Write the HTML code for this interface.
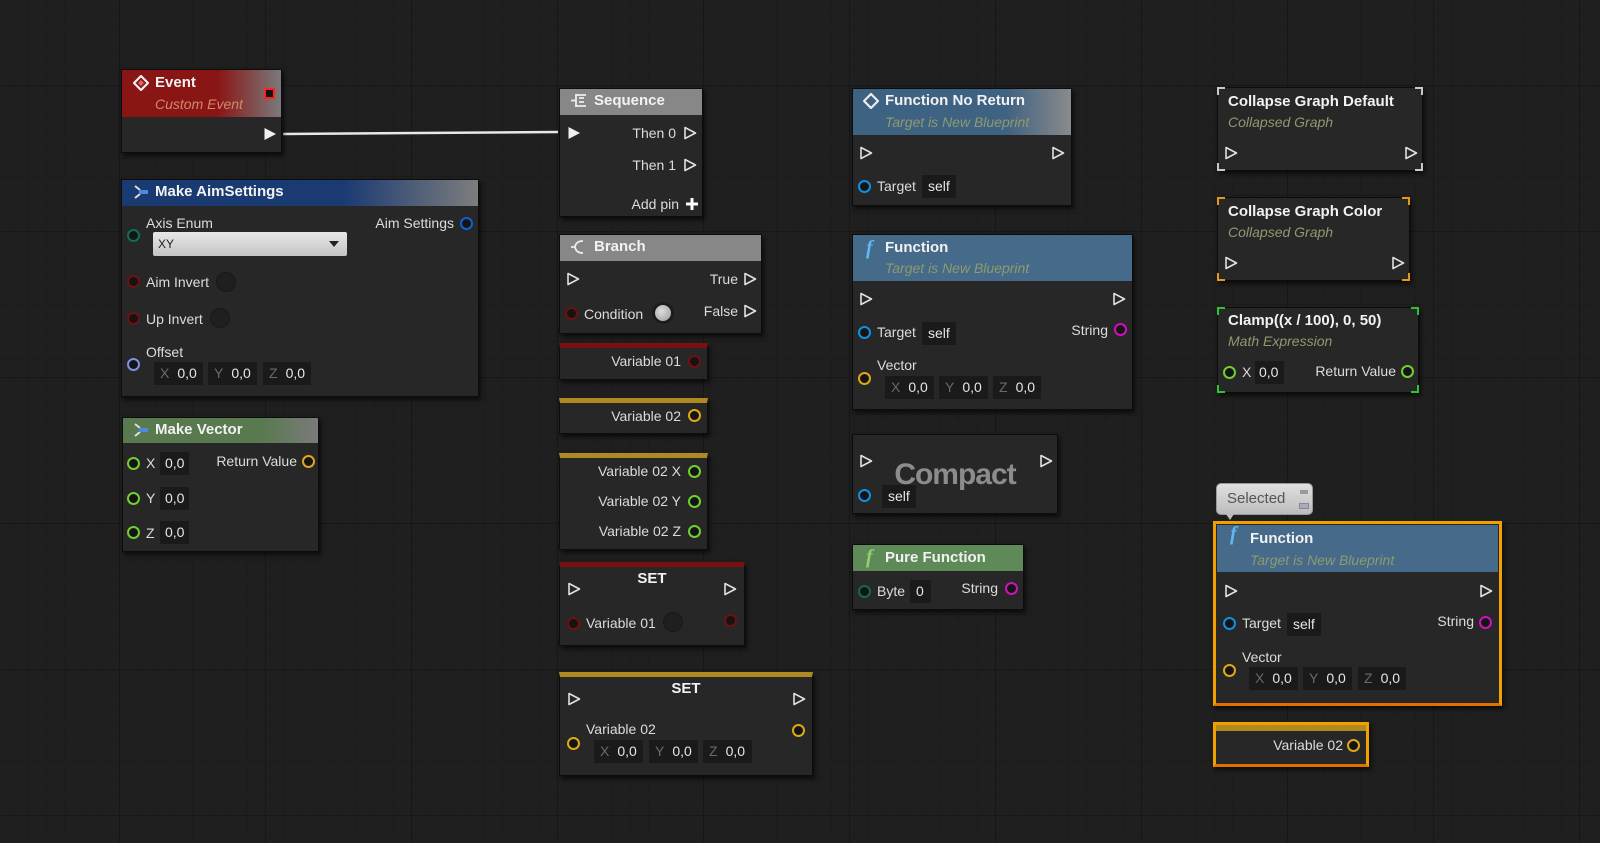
<!DOCTYPE html>
<html><head><meta charset="utf-8"><style>
*{margin:0;padding:0;box-sizing:border-box}
body{width:1600px;height:843px;overflow:hidden;position:relative;background-color:#1f1f1f;
background-image:
linear-gradient(to right,#171717 0,#171717 1px,transparent 1px),
linear-gradient(to bottom,#171717 0,#171717 1px,transparent 1px),
linear-gradient(to right,#1c1c1c 0,#1c1c1c 1px,transparent 1px),
linear-gradient(to bottom,#1c1c1c 0,#1c1c1c 1px,transparent 1px);
background-size:146px 146px,146px 146px,18.25px 18.25px,18.25px 18.25px;
background-position:119px 0,0 85px,119px 0,0 85px;
font-family:"Liberation Sans",sans-serif}
.n{position:absolute;background:#272727;border:1px solid #0c0c0c;box-shadow:2px 3px 4px rgba(0,0,0,.6)}
.h{position:absolute;left:0;right:0;top:0}
.t{position:absolute;font-size:14px;color:#dcdcdc;line-height:18px;white-space:nowrap}
.b{font-weight:bold;font-size:15px;color:#f2f2f2}
.s{font-style:italic;font-size:14px;color:#8f9a6e}
.p{position:absolute;width:13px;height:13px;border:2.5px solid;border-radius:50%;background:#141414}
.v{position:absolute;height:23px;background:#1a1a1a;font-size:14px;line-height:23px;color:#e6e6e6;padding:0 6px;white-space:nowrap}
.v i{font-style:normal;color:#6a6a6a;margin-right:8px}
.e{position:absolute;width:14px;height:14px}
.tog{position:absolute;width:20px;height:20px;border-radius:50%;background:#1f1f1f;border:1px solid #191919}
</style></head><body>
<svg width="0" height="0" style="position:absolute"><defs>
<symbol id="eo" viewBox="0 0 14 14"><path d="M2 1.5 L12.5 7 L2 12.5 Z" fill="none" stroke="#e0e0e0" stroke-width="1.6" stroke-linejoin="round"/></symbol>
<symbol id="ef" viewBox="0 0 14 14"><path d="M1.5 1 L13 7 L1.5 13 Z" fill="#f0f0f0"/></symbol>
</defs></svg>

<svg style="position:absolute;left:0;top:0" width="1600" height="843"><path d="M283 134 L558 132" stroke="#e8e8e8" stroke-width="2.5"/></svg>

<!-- Event -->
<div class="n" style="left:121px;top:69px;width:161px;height:84px">
<div class="h" style="height:47px;background:linear-gradient(to right,#8a1515 0,#8a1515 60%,#7a7a7a 100%)"></div>
<div style="position:absolute;left:142px;top:18px;width:11px;height:11px;background:#111;border:2px solid #ff2020"></div>
</div>
<svg style="position:absolute;left:133px;top:75px" width="16" height="16"><path d="M8 1 L15 8 L8 15 L1 8 Z" fill="none" stroke="#eee" stroke-width="2.2"/><path d="M8 5 L11 8 L8 11 L5 8Z" fill="#d66"/></svg>
<div class="t b" style="left:155px;top:74px">Event</div>
<div class="t s" style="left:155px;top:95px;color:#d08a6c">Custom Event</div>
<svg class="e" style="left:263px;top:127px"><use href="#ef"/></svg>

<!-- Make AimSettings -->
<div class="n" style="left:121px;top:179px;width:358px;height:218px">
<div class="h" style="height:26px;background:linear-gradient(to right,#1a3a72 0,#1a3a72 62%,#7d7d7d 100%)"></div>
</div>
<svg style="position:absolute;left:133px;top:184px" width="16" height="16"><path d="M2 2 L7 6 M2 14 L7 10" stroke="#ddd" stroke-width="2"/><rect x="6" y="6" width="9" height="4" fill="#4a8ae0"/></svg>
<div class="t b" style="left:155px;top:183px">Make AimSettings</div>
<div class="t" style="left:146px;top:214px">Axis Enum</div>
<div class="p" style="left:127px;top:229px;border-color:#0f6e5a"></div>
<div style="position:absolute;left:153px;top:232px;width:194px;height:24px;background:linear-gradient(#e8e8e8,#c4c4c4);border-radius:2px;font-size:12px;line-height:24px;padding-left:5px;color:#222">XY</div>
<svg style="position:absolute;left:329px;top:241px" width="10" height="6"><path d="M0 0 L10 0 L5 6Z" fill="#222"/></svg>
<div class="t" style="right:1146px;top:214px">Aim Settings</div>
<div class="p" style="left:460px;top:217px;border-color:#1060d0"></div>
<div class="p" style="left:127px;top:275px;border-color:#701010"></div>
<div class="t" style="left:146px;top:273px">Aim Invert</div>
<div class="tog" style="left:216px;top:272px"></div>
<div class="p" style="left:127px;top:312px;border-color:#701010"></div>
<div class="t" style="left:146px;top:310px">Up Invert</div>
<div class="tog" style="left:210px;top:308px"></div>
<div class="t" style="left:146px;top:343px">Offset</div>
<div class="p" style="left:127px;top:358px;border-color:#8090e0"></div>
<div class="v" style="left:154px;top:362px;width:49px"><i>X</i>0,0</div>
<div class="v" style="left:208px;top:362px;width:49px"><i>Y</i>0,0</div>
<div class="v" style="left:263px;top:362px;width:48px"><i>Z</i>0,0</div>

<!-- Make Vector -->
<div class="n" style="left:122px;top:417px;width:197px;height:135px">
<div class="h" style="height:25px;background:linear-gradient(to right,#587a4e 0,#587a4e 70%,#7a7a7a 100%)"></div>
</div>
<svg style="position:absolute;left:133px;top:422px" width="16" height="16"><path d="M2 2 L7 6 M2 14 L7 10" stroke="#ddd" stroke-width="2"/><rect x="6" y="6" width="9" height="4" fill="#4a8ae0"/></svg>
<div class="t b" style="left:155px;top:421px">Make Vector</div>
<div class="p" style="left:127px;top:457px;border-color:#70d030"></div><div class="t" style="left:146px;top:454px">X</div><div class="v" style="left:160px;top:452px;width:29px;padding:0 5px">0,0</div>
<div class="p" style="left:127px;top:492px;border-color:#70d030"></div><div class="t" style="left:146px;top:489px">Y</div><div class="v" style="left:160px;top:487px;width:29px;padding:0 5px">0,0</div>
<div class="p" style="left:127px;top:526px;border-color:#70d030"></div><div class="t" style="left:146px;top:524px">Z</div><div class="v" style="left:160px;top:521px;width:29px;padding:0 5px">0,0</div>
<div class="t" style="right:1303px;top:452px">Return Value</div>
<div class="p" style="left:302px;top:455px;border-color:#e0a818"></div>

<!-- Sequence -->
<div class="n" style="left:559px;top:88px;width:144px;height:129px">
<div class="h" style="height:26px;background:#878787"></div>
</div>
<svg style="position:absolute;left:570px;top:93px" width="17" height="15"><path d="M6 1 V14 M1 7.5 H6 M6 2 H16 M9 5 H14 M9 9 H14 M6 13 H16" stroke="#eee" stroke-width="1.8" fill="none"/></svg>
<div class="t b" style="left:594px;top:92px">Sequence</div>
<svg class="e" style="left:567px;top:126px"><use href="#ef"/></svg>
<div class="t" style="right:924px;top:124px">Then 0</div><svg class="e" style="left:683px;top:126px"><use href="#eo"/></svg>
<div class="t" style="right:924px;top:156px">Then 1</div><svg class="e" style="left:683px;top:158px"><use href="#eo"/></svg>
<div class="t" style="right:921px;top:195px">Add pin</div>
<svg style="position:absolute;left:686px;top:198px" width="12" height="12"><path d="M6 0 V12 M0 6 H12" stroke="#fff" stroke-width="3"/></svg>

<!-- Branch -->
<div class="n" style="left:559px;top:234px;width:203px;height:100px">
<div class="h" style="height:26px;background:#878787"></div>
</div>
<svg style="position:absolute;left:570px;top:239px" width="16" height="16"><path d="M13 2 Q6 2 5 8 Q6 14 13 14 M1 8 H5" stroke="#eee" stroke-width="1.8" fill="none"/></svg>
<div class="t b" style="left:594px;top:238px">Branch</div>
<svg class="e" style="left:566px;top:272px"><use href="#eo"/></svg>
<div class="t" style="right:862px;top:270px">True</div><svg class="e" style="left:743px;top:272px"><use href="#eo"/></svg>
<div class="p" style="left:565px;top:307px;border-color:#701010"></div>
<div class="t" style="left:584px;top:305px">Condition</div>
<div style="position:absolute;left:655px;top:305px;width:16px;height:16px;border-radius:50%;background:radial-gradient(circle at 40% 40%,#ddd,#999);box-shadow:0 0 0 3px #1c1c1c"></div>
<div class="t" style="right:862px;top:302px">False</div><svg class="e" style="left:743px;top:304px"><use href="#eo"/></svg>

<!-- Variable 01 -->
<div class="n" style="left:559px;top:343px;width:149px;height:37px;border-top:5px solid #7a1010"></div>
<div class="t" style="right:919px;top:352px">Variable 01</div>
<div class="p" style="left:688px;top:355px;border-color:#701010"></div>
<!-- Variable 02 -->
<div class="n" style="left:559px;top:398px;width:149px;height:36px;border-top:5px solid #b08a20"></div>
<div class="t" style="right:919px;top:407px">Variable 02</div>
<div class="p" style="left:688px;top:409px;border-color:#e0a818"></div>
<!-- Variable 02 XYZ -->
<div class="n" style="left:559px;top:453px;width:149px;height:97px;border-top:5px solid #b08a20"></div>
<div class="t" style="right:919px;top:462px">Variable 02 X</div><div class="p" style="left:688px;top:465px;border-color:#70d030"></div>
<div class="t" style="right:919px;top:492px">Variable 02 Y</div><div class="p" style="left:688px;top:495px;border-color:#70d030"></div>
<div class="t" style="right:919px;top:522px">Variable 02 Z</div><div class="p" style="left:688px;top:525px;border-color:#70d030"></div>

<!-- SET 1 -->
<div class="n" style="left:559px;top:562px;width:186px;height:84px;border-top:5px solid #7a1010"></div>
<div class="t b" style="left:559px;width:186px;text-align:center;top:570px">SET</div>
<svg class="e" style="left:567px;top:582px"><use href="#eo"/></svg><svg class="e" style="left:723px;top:582px"><use href="#eo"/></svg>
<div class="p" style="left:567px;top:617px;border-color:#701010"></div>
<div class="t" style="left:586px;top:614px">Variable 01</div>
<div class="tog" style="left:663px;top:612px"></div>
<div class="p" style="left:724px;top:614px;border-color:#701010"></div>

<!-- SET 2 -->
<div class="n" style="left:559px;top:672px;width:254px;height:104px;border-top:5px solid #b08a20"></div>
<div class="t b" style="left:559px;width:254px;text-align:center;top:680px">SET</div>
<svg class="e" style="left:567px;top:692px"><use href="#eo"/></svg><svg class="e" style="left:792px;top:692px"><use href="#eo"/></svg>
<div class="t" style="left:586px;top:720px">Variable 02</div>
<div class="p" style="left:567px;top:737px;border-color:#e0a818"></div>
<div class="p" style="left:792px;top:724px;border-color:#e0a818"></div>
<div class="v" style="left:594px;top:740px;width:49px"><i>X</i>0,0</div>
<div class="v" style="left:649px;top:740px;width:49px"><i>Y</i>0,0</div>
<div class="v" style="left:703px;top:740px;width:49px"><i>Z</i>0,0</div>

<!-- Function No Return -->
<div class="n" style="left:852px;top:88px;width:220px;height:118px">
<div class="h" style="height:46px;background:linear-gradient(to right,#3e6282 0,#3e6282 70%,#8a8a8a 100%)"></div>
</div>
<svg style="position:absolute;left:863px;top:93px" width="16" height="16"><path d="M8 1 L15 8 L8 15 L1 8 Z" fill="none" stroke="#eee" stroke-width="2.2"/></svg>
<div class="t b" style="left:885px;top:92px">Function No Return</div>
<div class="t s" style="left:885px;top:113px">Target is New Blueprint</div>
<svg class="e" style="left:859px;top:146px"><use href="#eo"/></svg><svg class="e" style="left:1051px;top:146px"><use href="#eo"/></svg>
<div class="p" style="left:858px;top:180px;border-color:#1090e0"></div>
<div class="t" style="left:877px;top:177px">Target</div><div class="v" style="left:922px;top:175px;width:34px">self</div>

<!-- Function -->
<div class="n" style="left:852px;top:234px;width:281px;height:176px">
<div class="h" style="height:46px;background:#456a8a"></div>
</div>
<div class="t" style="left:866px;top:237px;font:italic bold 20px 'Liberation Serif',serif;color:#60b8f0">f</div>
<div class="t b" style="left:885px;top:239px">Function</div>
<div class="t s" style="left:885px;top:259px">Target is New Blueprint</div>
<svg class="e" style="left:859px;top:292px"><use href="#eo"/></svg><svg class="e" style="left:1112px;top:292px"><use href="#eo"/></svg>
<div class="p" style="left:858px;top:326px;border-color:#1090e0"></div>
<div class="t" style="left:877px;top:323px">Target</div><div class="v" style="left:922px;top:322px;width:34px">self</div>
<div class="t" style="right:492px;top:321px">String</div>
<div class="p" style="left:1114px;top:323px;border-color:#d010c0"></div>
<div class="t" style="left:877px;top:356px">Vector</div>
<div class="p" style="left:858px;top:372px;border-color:#e0a818"></div>
<div class="v" style="left:885px;top:376px;width:49px"><i>X</i>0,0</div>
<div class="v" style="left:939px;top:376px;width:49px"><i>Y</i>0,0</div>
<div class="v" style="left:993px;top:376px;width:48px"><i>Z</i>0,0</div>

<!-- Compact -->
<div class="n" style="left:852px;top:434px;width:206px;height:80px"></div>
<div class="t" style="left:852px;width:206px;text-align:center;top:458px;font-size:30px;line-height:34px;font-weight:bold;color:#8c8c8c;letter-spacing:-1px">Compact</div>
<svg class="e" style="left:859px;top:454px"><use href="#eo"/></svg><svg class="e" style="left:1039px;top:454px"><use href="#eo"/></svg>
<div class="p" style="left:858px;top:489px;border-color:#1090e0"></div>
<div class="v" style="left:882px;top:485px;width:34px">self</div>

<!-- Pure Function -->
<div class="n" style="left:852px;top:544px;width:172px;height:66px">
<div class="h" style="height:26px;background:#5e8a58"></div>
</div>
<div class="t" style="left:866px;top:546px;font:italic bold 20px 'Liberation Serif',serif;color:#90d070">f</div>
<div class="t b" style="left:885px;top:549px">Pure Function</div>
<div class="p" style="left:858px;top:585px;border-color:#0e6a5a"></div>
<div class="t" style="left:877px;top:582px">Byte</div><div class="v" style="left:910px;top:580px;width:21px">0</div>
<div class="t" style="right:602px;top:579px">String</div>
<div class="p" style="left:1005px;top:582px;border-color:#d010c0"></div>

<!-- Collapse Graph Default -->
<div class="n" style="left:1217px;top:87px;width:206px;height:84px"></div>
<div class="t b" style="left:1228px;top:93px">Collapse Graph Default</div>
<div class="t s" style="left:1228px;top:113px">Collapsed Graph</div>
<svg class="e" style="left:1224px;top:146px"><use href="#eo"/></svg><svg class="e" style="left:1404px;top:146px"><use href="#eo"/></svg>
<svg style="position:absolute;left:1217px;top:87px" width="206" height="84"><path d="M1 8 V1 H8 M198 1 H205 V8 M1 76 V83 H8 M198 83 H205 V76" stroke="#c8c8c8" stroke-width="2" fill="none"/></svg>
<!-- Collapse Graph Color -->
<div class="n" style="left:1217px;top:197px;width:193px;height:84px"></div>
<div class="t b" style="left:1228px;top:203px">Collapse Graph Color</div>
<div class="t s" style="left:1228px;top:223px">Collapsed Graph</div>
<svg class="e" style="left:1224px;top:256px"><use href="#eo"/></svg><svg class="e" style="left:1391px;top:256px"><use href="#eo"/></svg>
<svg style="position:absolute;left:1217px;top:197px" width="193" height="84"><path d="M1 8 V1 H8 M185 1 H192 V8 M1 76 V83 H8 M185 83 H192 V76" stroke="#e09a18" stroke-width="2" fill="none"/></svg>
<!-- Clamp -->
<div class="n" style="left:1217px;top:307px;width:202px;height:86px"></div>
<div class="t b" style="left:1228px;top:312px">Clamp((x / 100), 0, 50)</div>
<div class="t s" style="left:1228px;top:332px">Math Expression</div>
<div class="p" style="left:1223px;top:366px;border-color:#70d030"></div>
<div class="t" style="left:1242px;top:363px">X</div><div class="v" style="left:1255px;top:361px;width:29px;padding:0 4px">0,0</div>
<div class="t" style="right:204px;top:362px">Return Value</div>
<div class="p" style="left:1401px;top:365px;border-color:#70d030"></div>
<svg style="position:absolute;left:1217px;top:307px" width="202" height="86"><path d="M1 8 V1 H8 M194 1 H201 V8 M1 78 V85 H8 M194 85 H201 V78" stroke="#30c030" stroke-width="2" fill="none"/></svg>

<!-- Selected comment bubble -->
<div style="position:absolute;left:1216px;top:483px;width:97px;height:32px;border-radius:5px;background:linear-gradient(#e0e0e0,#bcbcbc);border:1px solid #999"></div>
<div style="position:absolute;left:1226px;top:514px;width:0;height:0;border-left:4px solid transparent;border-right:4px solid transparent;border-top:6px solid #bcbcbc"></div>
<div class="t" style="left:1227px;top:490px;font-size:15px;color:#555">Selected</div>
<div style="position:absolute;left:1300px;top:490px;width:8px;height:4px;background:#999"></div>
<div style="position:absolute;left:1299px;top:503px;width:10px;height:6px;background:#aab;border:1px solid #889"></div>

<!-- Selected Function -->
<div class="n" style="left:1213px;top:521px;width:289px;height:185px;border:3px solid #f0a000;border-bottom-color:#e07000;background:#272727"></div>
<div style="position:absolute;left:1217px;top:525px;width:281px;height:47px;background:#456a8a"></div>
<div class="t" style="left:1230px;top:523px;font:italic bold 20px 'Liberation Serif',serif;color:#60b8f0">f</div>
<div class="t b" style="left:1250px;top:530px">Function</div>
<div class="t s" style="left:1250px;top:551px">Target is New Blueprint</div>
<svg class="e" style="left:1224px;top:584px"><use href="#eo"/></svg><svg class="e" style="left:1479px;top:584px"><use href="#eo"/></svg>
<div class="p" style="left:1223px;top:617px;border-color:#1090e0"></div>
<div class="t" style="left:1242px;top:614px">Target</div><div class="v" style="left:1287px;top:613px;width:34px">self</div>
<div class="t" style="right:126px;top:612px">String</div>
<div class="p" style="left:1479px;top:616px;border-color:#d010c0"></div>
<div class="t" style="left:1242px;top:648px">Vector</div>
<div class="p" style="left:1223px;top:664px;border-color:#e0a818"></div>
<div class="v" style="left:1249px;top:667px;width:49px"><i>X</i>0,0</div>
<div class="v" style="left:1303px;top:667px;width:49px"><i>Y</i>0,0</div>
<div class="v" style="left:1358px;top:667px;width:48px"><i>Z</i>0,0</div>

<!-- Selected Variable 02 -->
<div class="n" style="left:1213px;top:722px;width:156px;height:45px;border:3px solid #f0a000;border-bottom-color:#e07000;background:#272727"></div>
<div style="position:absolute;left:1216px;top:725px;width:150px;height:6px;background:#b08a20"></div>
<div class="t" style="right:257px;top:736px">Variable 02</div>
<div class="p" style="left:1347px;top:739px;border-color:#e0a818"></div>
</body></html>
